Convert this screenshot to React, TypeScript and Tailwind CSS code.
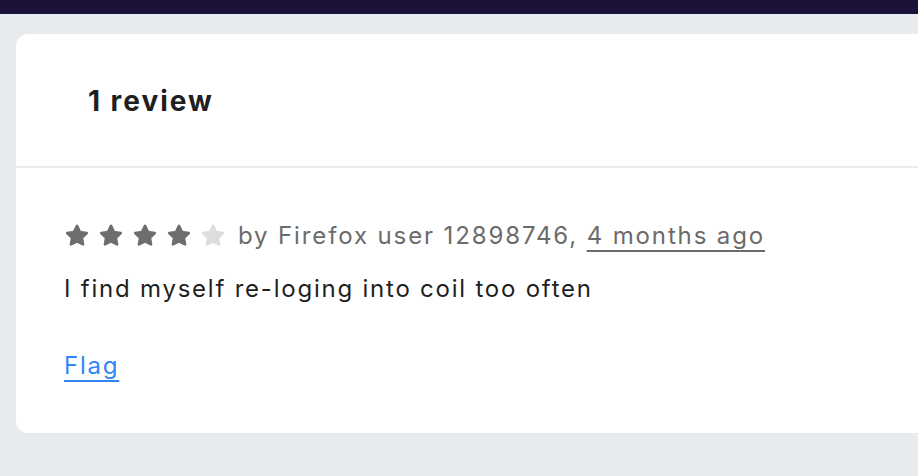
import React from 'react';

const Star = ({ filled }: { filled: boolean }) => (
  <svg
    viewBox="0 0 24 24"
    className={filled ? 'w-[26px] h-[26px] text-[#6e6e6e]' : 'w-[26px] h-[26px] text-[#dddddd]'}
    fill="currentColor"
  >
    <path
      strokeLinejoin="round"
      stroke="currentColor"
      strokeWidth="2.4"
      d="M12 2.6l2.8 5.7 6.25.9-4.5 4.4 1.05 6.2L12 16.9l-5.6 2.9 1.05-6.2-4.5-4.4 6.25-.9z"
    />
  </svg>
);

export default function App() {
  const rating = 4;

  return (
    <div
      className="min-h-[476px] bg-[#e8ebee] flex flex-col"
      style={{ fontFamily: 'Inter, "Noto Sans", sans-serif' }}
    >
      <div className="h-[14px] bg-[#1c1239]" />
      <div className="pt-[20px] pl-[16px]">
        <div className="bg-white rounded-l-[12px] h-[399px] flex flex-col">
          <div className="h-[134px] border-b-2 border-[#e8ebee] flex items-center pl-[72px] pt-[2px]">
            <h2 className="text-[28px] font-bold text-[#1f1f1f] tracking-[0.07em]">1 review</h2>
          </div>
          <div className="pl-[48px] pt-[50px] flex flex-col">
            <div className="flex items-center gap-[12px]">
              <div className="flex items-center gap-[8px]">
                {[1, 2, 3, 4, 5].map((n) => (
                  <Star key={n} filled={n <= rating} />
                ))}
              </div>
              <span className="text-[24px] text-[#6b6b6b] tracking-[0.078em]">
                by Firefox user 12898746,{' '}
                <a href="#" className="underline underline-offset-[6px]">
                  4 months ago
                </a>
              </span>
            </div>
            <p className="text-[24px] text-[#1f1f1f] mt-[17px] tracking-[0.074em]">
              I find myself re-loging into coil too often
            </p>
            <a
              href="#"
              className="text-[24px] text-[#2f86f6] underline underline-offset-[6px] mt-[41px] self-start tracking-[0.074em]"
            >
              Flag
            </a>
          </div>
        </div>
      </div>
    </div>
  );
}
